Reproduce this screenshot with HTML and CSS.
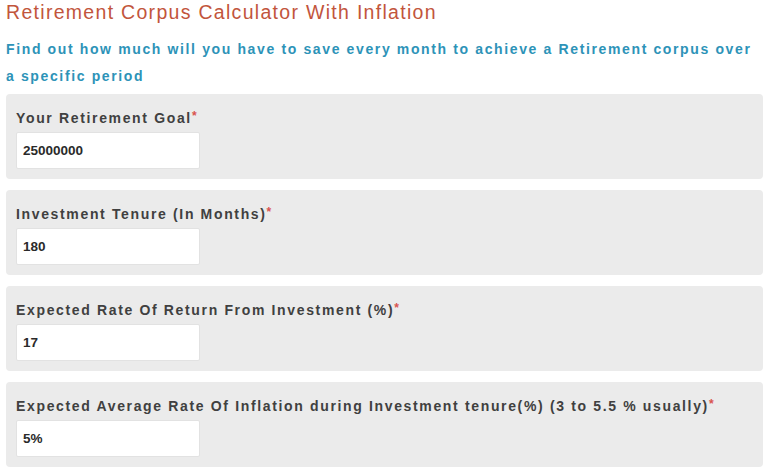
FILE: index.html
```html
<!DOCTYPE html>
<html lang="en">
<head>
<meta charset="utf-8">
<title>Retirement Corpus Calculator With Inflation</title>
<link rel="stylesheet" href="styles.css">
</head>
<body>
<div class="page">
  <h1 class="title">Retirement Corpus Calculator With Inflation</h1>
  <p class="subtitle">Find out how much will you have to save every month to achieve a Retirement corpus over a specific period</p>
  <div class="fields">
    <div class="field">
      <label class="label">Your Retirement Goal<span class="req">*</span></label>
      <input class="input" type="text" value="25000000">
    </div>
    <div class="field">
      <label class="label">Investment Tenure (In Months)<span class="req">*</span></label>
      <input class="input" type="text" value="180">
    </div>
    <div class="field">
      <label class="label">Expected Rate Of Return From Investment (%)<span class="req">*</span></label>
      <input class="input" type="text" value="17">
    </div>
    <div class="field">
      <label class="label">Expected Average Rate Of Inflation during Investment tenure(%) (3 to 5.5 % usually)<span class="req">*</span></label>
      <input class="input" type="text" value="5%">
    </div>
  </div>
</div>
</body>
</html>
```

FILE: styles.css
```css
html, body {
  margin: 0;
  padding: 0;
  background: #ffffff;
}
body {
  font-family: "Liberation Sans", Arial, sans-serif;
}
.page {
  padding: 0 5px 0 6px;
}
.title {
  margin: 0;
  font-size: 19.5px;
  line-height: 24px;
  font-weight: normal;
  letter-spacing: 1.3px;
  color: #c2553c;
}
.subtitle {
  margin: 12px 0 4px;
  font-size: 14px;
  line-height: 27px;
  font-weight: bold;
  letter-spacing: 1.63px;
  color: #2d93b8;
}
.fields {
  display: flex;
  flex-direction: column;
  gap: 11px;
}
.field {
  background: #ebebeb;
  border-radius: 4px;
  padding: 15px 10px 10px;
  display: flex;
  flex-direction: column;
  align-items: flex-start;
  gap: 5px;
}
.label {
  font-size: 14px;
  line-height: 18px;
  font-weight: bold;
  letter-spacing: 1.65px;
  color: #404040;
}
.req {
  color: #d9534f;
  font-size: 12px;
  letter-spacing: 0;
  vertical-align: top;
  line-height: 14px;
}
.input {
  box-sizing: border-box;
  width: 184px;
  height: 37px;
  margin: 0;
  border: 1px solid #e2e2e2;
  border-radius: 2px;
  background: #ffffff;
  padding: 0 6px;
  font-family: "Liberation Sans", Arial, sans-serif;
  font-size: 13.5px;
  font-weight: bold;
  color: #2a2a2a;
  outline: none;
}
```
